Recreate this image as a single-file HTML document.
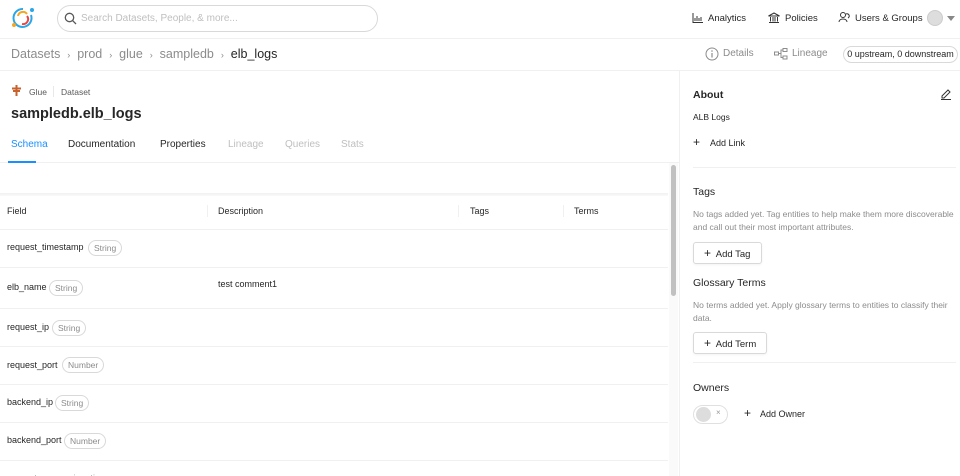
<!DOCTYPE html>
<html style="overflow:hidden"><head><style>
*{box-sizing:border-box;margin:0;padding:0}
html,body{width:960px;height:476px;overflow:hidden}
body{background:#fff;font-family:"Liberation Sans",sans-serif;color:#262626;position:relative}
.abs{position:absolute}
.t{position:absolute;white-space:nowrap}
.pill{position:absolute;border:1px solid #d9d9d9;border-radius:10px;font-size:8.5px;color:#8c8c8c;padding:0 5px;height:16px;line-height:14px}
.rowb{position:absolute;left:0;width:668px;height:1px;background:#f0f0f0}
.fld{font-size:9px;color:#262626}
.btn{position:absolute;border:1px solid #d9d9d9;border-radius:3px;height:22px;font-size:9.5px;color:#262626;line-height:20px;padding-left:10px;box-shadow:0 1px 2px rgba(0,0,0,.05)}
.gray{color:#8c8c8c;font-size:8.5px;line-height:13px}
</style></head><body>
<svg class="abs" style="left:10px;top:6px" width="26" height="24" viewBox="0 0 26 24">
<path d="M13 3 A9 9 0 1 0 21 9" fill="none" stroke="#29a7e8" stroke-width="2"/>
<path d="M8 10 A5 5 0 0 1 17 8" fill="none" stroke="#f5a623" stroke-width="2"/>
<path d="M17 10 A5 5 0 0 1 12 18" fill="none" stroke="#e84545" stroke-width="2"/>
<circle cx="22" cy="4" r="2" fill="#29a7e8"/><circle cx="4" cy="19" r="2" fill="#f5a623"/>
</svg>
<div class="abs" style="left:57px;top:5px;width:321px;height:27px;border:1px solid #d9d9d9;border-radius:14px"></div>
<svg class="abs" style="left:64px;top:12px" width="13" height="13" viewBox="0 0 13 13"><circle cx="5.5" cy="5.5" r="4.2" fill="none" stroke="#595959" stroke-width="1.3"/><path d="M8.6 8.6L12 12" stroke="#595959" stroke-width="1.3"/></svg>
<div class="t" style="left:81px;top:13px;font-size:10px;color:#bfbfbf">Search Datasets, People, &amp; more...</div>
<svg class="abs" style="left:692px;top:13px" width="11" height="10"><path d="M1 0V9.5H11M3 8V5M5 8V3M7 8V5M9 8V4" stroke="#333" fill="none"/></svg>
<div class="t" style="left:708px;top:13px;font-size:9.5px">Analytics</div>
<svg class="abs" style="left:768px;top:12px" width="12" height="11"><path d="M0.5 4L6 1L11.5 4ZM1 10.5H11M2.5 5V9.5M5 5V9.5M7 5V9.5M9.5 5V9.5" stroke="#333" fill="none"/></svg>
<div class="t" style="left:785px;top:13px;font-size:9.5px">Policies</div>
<svg class="abs" style="left:838px;top:11px" width="12" height="12"><circle cx="5" cy="4" r="2.5" fill="none" stroke="#333"/><path d="M1 11C1 7 9 7 9 11M8 3A2 2 0 0 1 10 7" stroke="#333" fill="none"/></svg>
<div class="t" style="left:855px;top:13px;font-size:9.5px">Users &amp; Groups</div>
<div class="abs" style="left:927px;top:10px;width:16px;height:16px;border-radius:50%;background:#ddd;border:1px solid #ccc"></div>
<div class="abs" style="left:947px;top:16px;border-left:4px solid transparent;border-right:4px solid transparent;border-top:5px solid #888"></div>
<div class="abs" style="left:0;top:38px;width:960px;height:1px;background:#f0f0f0"></div>
<div class="t" style="left:11px;top:47px;font-size:12.5px;color:#8c8c8c">Datasets&nbsp; <span style="font-size:9px">›</span> &nbsp;prod&nbsp; <span style="font-size:9px">›</span> &nbsp;glue&nbsp; <span style="font-size:9px">›</span> &nbsp;sampledb&nbsp; <span style="font-size:9px">›</span> &nbsp;<span style="color:#262626">elb_logs</span></div>
<svg class="abs" style="left:705px;top:47px" width="14" height="14"><circle cx="7" cy="7" r="6" fill="none" stroke="#8c8c8c"/><path d="M7 6V10.5" stroke="#8c8c8c" stroke-width="1.2"/><circle cx="7" cy="4" r=".8" fill="#8c8c8c"/></svg>
<div class="t" style="left:723px;top:48px;font-size:10px;color:#8c8c8c">Details</div>
<svg class="abs" style="left:774px;top:48px" width="14" height="12"><rect x="0.5" y="4" width="4" height="3" fill="none" stroke="#8c8c8c"/><rect x="9" y="0.5" width="4" height="3" fill="none" stroke="#8c8c8c"/><rect x="9" y="8" width="4" height="3" fill="none" stroke="#8c8c8c"/><path d="M4.5 5.5H7V2H9M7 5.5V9.5H9" stroke="#8c8c8c" fill="none"/></svg>
<div class="t" style="left:792px;top:48px;font-size:10px;color:#8c8c8c">Lineage</div>
<div class="abs" style="left:843px;top:46px;width:115px;height:17px;border:1px solid #d9d9d9;border-radius:9px;font-size:9px;line-height:15px;text-align:center">0 upstream, 0 downstream</div>
<div class="abs" style="left:0;top:70px;width:960px;height:1px;background:#f0f0f0"></div>
<svg class="abs" style="left:11px;top:85px" width="11" height="11"><path d="M5.5 0V11M1 3.5H10M2 6H9" stroke="#c7622e" stroke-width="2"/></svg>
<div class="t" style="left:29px;top:87px;font-size:8.5px;color:#595959">Glue</div>
<div class="abs" style="left:53px;top:86px;width:1px;height:11px;background:#e8e8e8"></div>
<div class="t" style="left:61px;top:87px;font-size:8.5px;color:#595959">Dataset</div>
<div class="t" style="left:11px;top:106px;font-size:14.5px;font-weight:bold;color:#262626">sampledb.elb_logs</div>
<div class="t" style="left:11px;top:139px;font-size:10px;color:#1890ff">Schema</div>
<div class="t" style="left:68px;top:139px;font-size:10px">Documentation</div>
<div class="t" style="left:160px;top:139px;font-size:10px">Properties</div>
<div class="t" style="left:228px;top:139px;font-size:10px;color:#bfbfbf">Lineage</div>
<div class="t" style="left:285px;top:139px;font-size:10px;color:#bfbfbf">Queries</div>
<div class="t" style="left:341px;top:139px;font-size:10px;color:#bfbfbf">Stats</div>
<div class="abs" style="left:0;top:162px;width:679px;height:1px;background:#f0f0f0"></div>
<div class="abs" style="left:8px;top:161px;width:28px;height:2px;background:#1890ff"></div>
<div class="abs" style="left:0;top:193px;width:668px;height:3px;background:linear-gradient(#f0f0f0,#fafafa)"></div>
<div class="t fld" style="left:7px;top:206px">Field</div>
<div class="abs" style="left:207px;top:205px;width:1px;height:12px;background:#f0f0f0"></div>
<div class="t fld" style="left:218px;top:206px">Description</div>
<div class="abs" style="left:458px;top:205px;width:1px;height:12px;background:#f0f0f0"></div>
<div class="t fld" style="left:470px;top:206px">Tags</div>
<div class="abs" style="left:563px;top:205px;width:1px;height:12px;background:#f0f0f0"></div>
<div class="t fld" style="left:574px;top:206px">Terms</div>
<div class="rowb" style="top:229px"></div>
<div class="t fld" style="left:7px;top:242px">request_timestamp</div><div class="pill" style="left:88px;top:240px">String</div>
<div class="rowb" style="top:267px"></div>
<div class="t fld" style="left:7px;top:282px">elb_name</div><div class="pill" style="left:49px;top:280px">String</div>
<div class="t fld" style="left:218px;top:279px">test comment1</div>
<div class="rowb" style="top:308px"></div>
<div class="t fld" style="left:7px;top:322px">request_ip</div><div class="pill" style="left:52px;top:320px">String</div>
<div class="rowb" style="top:346px"></div>
<div class="t fld" style="left:7px;top:360px">request_port</div><div class="pill" style="left:62px;top:357px">Number</div>
<div class="rowb" style="top:384px"></div>
<div class="t fld" style="left:7px;top:397px">backend_ip</div><div class="pill" style="left:55px;top:395px">String</div>
<div class="rowb" style="top:422px"></div>
<div class="t fld" style="left:7px;top:435px">backend_port</div><div class="pill" style="left:64px;top:433px">Number</div>
<div class="rowb" style="top:460px"></div>
<div class="t fld" style="left:7px;top:473px;color:#999">request_processing_time</div>
<div class="abs" style="left:669px;top:163px;width:9px;height:313px;background:#fafafa"></div>
<div class="abs" style="left:671px;top:165px;width:5px;height:131px;border-radius:3px;background:#c1c1c1"></div>
<div class="abs" style="left:679px;top:71px;width:1px;height:405px;background:#f0f0f0"></div>
<div class="t" style="left:693px;top:89px;font-size:10.5px;font-weight:bold">About</div>
<svg class="abs" style="left:940px;top:88px" width="12" height="12"><path d="M2 8L8 2L10 4L4 10H2Z M1 11.5H11" stroke="#333" fill="none"/></svg>
<div class="t" style="left:693px;top:112px;font-size:8.5px">ALB Logs</div>
<div class="t" style="left:693px;top:136px;font-size:12px;line-height:12px">+</div>
<div class="t" style="left:710px;top:138px;font-size:9px">Add Link</div>
<div class="abs" style="left:693px;top:167px;width:263px;height:1px;background:#f0f0f0"></div>
<div class="t" style="left:693px;top:186px;font-size:10.5px">Tags</div>
<div class="t gray" style="left:693px;top:208px;width:265px;white-space:normal">No tags added yet. Tag entities to help make them more discoverable and call out their most important attributes.</div>
<div class="btn" style="left:693px;top:242px;width:69px"><span style="font-size:12px">+</span>&nbsp; Add Tag</div>
<div class="t" style="left:693px;top:277px;font-size:10.5px">Glossary Terms</div>
<div class="t gray" style="left:693px;top:299px;width:265px;white-space:normal">No terms added yet. Apply glossary terms to entities to classify their data.</div>
<div class="btn" style="left:693px;top:332px;width:74px"><span style="font-size:12px">+</span>&nbsp; Add Term</div>
<div class="abs" style="left:693px;top:362px;width:263px;height:1px;background:#f0f0f0"></div>
<div class="t" style="left:693px;top:382px;font-size:10.5px">Owners</div>
<div class="abs" style="left:693px;top:405px;width:35px;height:19px;border:1px solid #e0e0e0;border-radius:10px"></div>
<div class="abs" style="left:696px;top:407px;width:15px;height:15px;border-radius:50%;background:#ddd"></div>
<div class="t" style="left:716px;top:408px;font-size:8px;color:#999">×</div>
<div class="t" style="left:744px;top:406px;font-size:12px">+</div>
<div class="t" style="left:760px;top:409px;font-size:9px">Add Owner</div>
</body></html>
